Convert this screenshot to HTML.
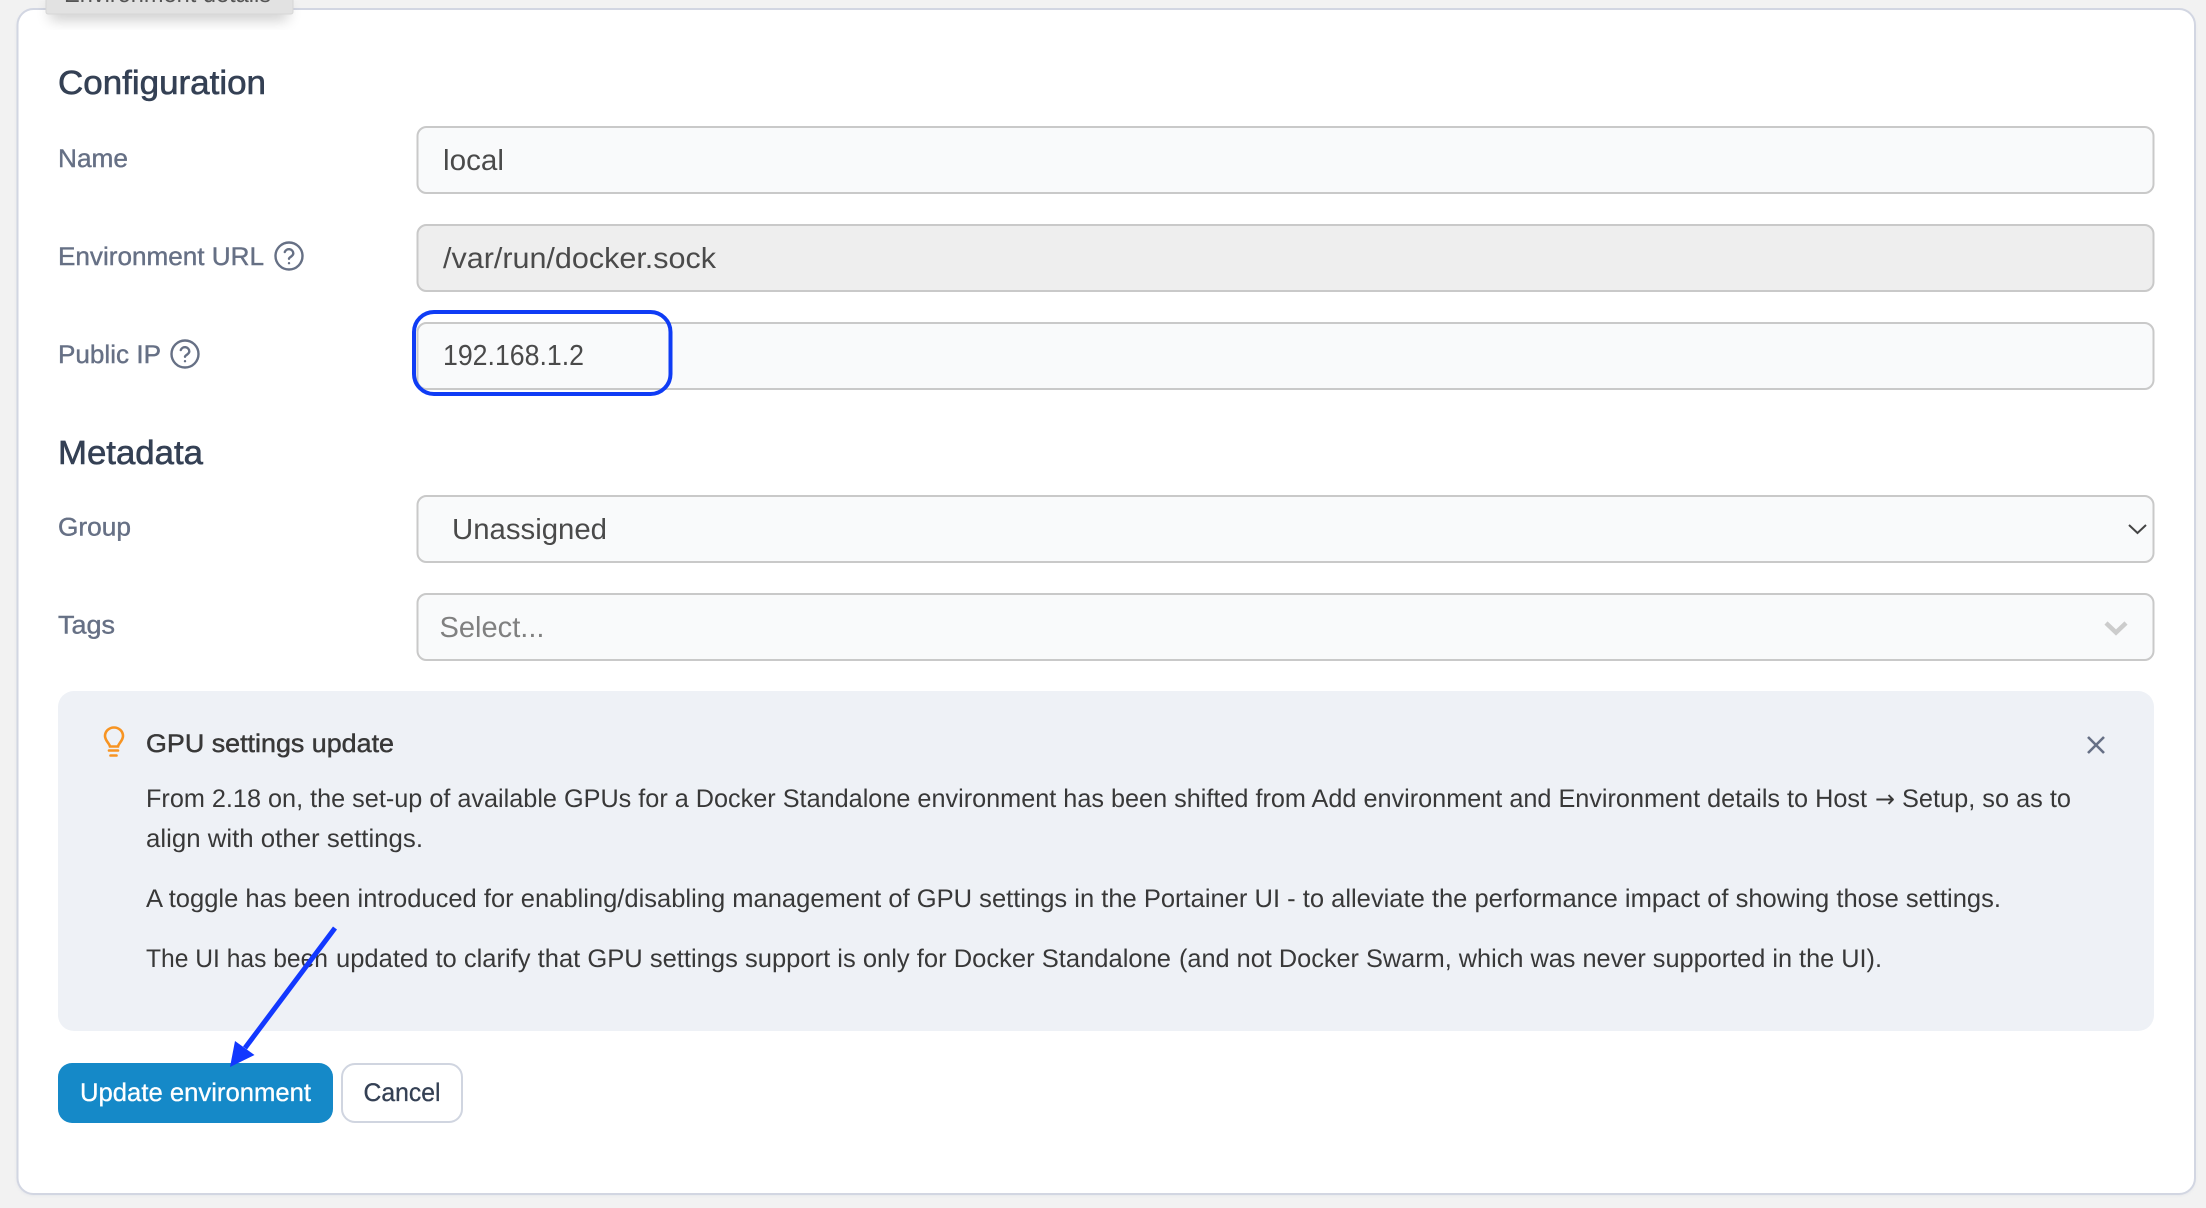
<!DOCTYPE html>
<html lang="en"><head><meta charset="utf-8"><title>Environment details</title>
<style>
html,body{margin:0;padding:0;width:2206px;height:1208px;overflow:hidden;background:#f2f2f2}
svg{display:block;position:absolute;left:0;top:0}
text{font-family:"Liberation Sans",sans-serif;text-rendering:geometricPrecision}
.h{font-size:33.5px;fill:#344054;stroke:#344054;stroke-width:.6px}
.l{font-size:25.5px;fill:#667085;stroke:#667085;stroke-width:.4px}
.v{font-size:29px;fill:#4a4a4a}
.b{font-size:25.5px;fill:#383838}
</style></head><body>
<svg width="2206" height="1208" viewBox="0 0 2206 1208" xmlns="http://www.w3.org/2000/svg">
<defs>
<filter id="s1" x="-20%" y="-20%" width="140%" height="180%"><feGaussianBlur stdDeviation="7"/></filter>
<filter id="s2" x="-2%" y="-2%" width="104%" height="104%"><feGaussianBlur stdDeviation="1.5"/></filter>
</defs>
<rect width="2206" height="1208" fill="#f2f2f2"/>
<rect x="17" y="11" width="2178" height="1184" rx="16" fill="#c9cedb" opacity=".5" filter="url(#s2)"/>
<rect x="17.5" y="9" width="2177.5" height="1185" rx="16" fill="#fff" stroke="#d2d6e2" stroke-width="2"/>
<rect x="50" y="4" width="238" height="16" fill="#000" opacity=".2" filter="url(#s1)"/>
<rect x="46" y="-10" width="247" height="24" rx="2" fill="#e2e2e2" stroke="#d6d6d6"/>
<text x="64" y="2" font-size="25" fill="#555" textLength="207" lengthAdjust="spacingAndGlyphs">Environment details</text>

<text class="h" x="58" y="94" textLength="208" lengthAdjust="spacingAndGlyphs">Configuration</text>
<text class="l" x="58" y="167" textLength="70" lengthAdjust="spacingAndGlyphs">Name</text>
<rect x="417.5" y="127" width="1736" height="66" rx="9" fill="#f9fafb" stroke="#c9c9c9" stroke-width="2"/>
<text class="v" x="443" y="170" textLength="61" lengthAdjust="spacingAndGlyphs">local</text>

<text class="l" x="58" y="265" textLength="206" lengthAdjust="spacingAndGlyphs">Environment URL</text>
<g fill="none" stroke="#667085" stroke-width="2.4" stroke-linecap="round" stroke-linejoin="round">
<circle cx="289" cy="256" r="13.5"/>
<path d="M284.8 252a4.4 4.4 0 0 1 8.5 1.4c0 2.9-4.3 3.7-4.3 5.4"/><path d="M289 263.2h.02"/>
<circle cx="185" cy="354" r="13.5"/>
<path d="M180.8 350a4.4 4.4 0 0 1 8.5 1.4c0 2.9-4.3 3.7-4.3 5.4"/><path d="M185 361.2h.02"/>
</g>
<rect x="417.5" y="225" width="1736" height="66" rx="9" fill="#eeeeee" stroke="#c9c9c9" stroke-width="2"/>
<text class="v" x="443" y="268" textLength="273" lengthAdjust="spacingAndGlyphs">/var/run/docker.sock</text>

<text class="l" x="58" y="363" textLength="103" lengthAdjust="spacingAndGlyphs">Public IP</text>
<rect x="417.5" y="323" width="1736" height="66" rx="9" fill="#f9fafb" stroke="#c9c9c9" stroke-width="2"/>
<text class="v" x="443" y="365" textLength="141" lengthAdjust="spacingAndGlyphs">192.168.1.2</text>
<rect x="414" y="312" width="256.5" height="82" rx="20" fill="none" stroke="#0f3cf5" stroke-width="4"/>

<text class="h" x="58" y="464" textLength="145" lengthAdjust="spacingAndGlyphs">Metadata</text>
<text class="l" x="58" y="535.5" textLength="73" lengthAdjust="spacingAndGlyphs">Group</text>
<rect x="417.5" y="496" width="1736" height="66" rx="9" fill="#f9fafb" stroke="#c9c9c9" stroke-width="2"/>
<text class="v" x="452" y="539" textLength="155" lengthAdjust="spacingAndGlyphs">Unassigned</text>
<path d="M2129 525l8.5 8 8.5-8" fill="none" stroke="#444" stroke-width="2"/>

<text class="l" x="58" y="633.5" textLength="57" lengthAdjust="spacingAndGlyphs">Tags</text>
<rect x="417.5" y="594" width="1736" height="66" rx="9" fill="#f9fafb" stroke="#c9c9c9" stroke-width="2"/>
<text class="v" x="439.5" y="637" style="fill:#808080" textLength="105" lengthAdjust="spacingAndGlyphs">Select...</text>
<path d="M2106 623l10 9.5 10-9.5" fill="none" stroke="#cccccc" stroke-width="4.5"/>

<rect x="58" y="691" width="2096" height="340" rx="16" fill="#eef1f6"/>
<g fill="none" stroke="#f79422" stroke-width="2.6" stroke-linecap="round">
<path d="M110 746.5c-.5-3-5-6-5-10.500a9 8.500 0 0 1 18 0c0 4.500-4.500 7.500-5 10.500z"/>
<path d="M109 750.5h9"/><path d="M110.5 755.5h6"/>
</g>
<text class="b" x="146" y="752" textLength="248" lengthAdjust="spacingAndGlyphs" style="stroke:#383838;stroke-width:.45px">GPU settings update</text>
<path d="M2088 737l16 16M2104 737l-16 16" fill="none" stroke="#667085" stroke-width="2.6"/>
<text class="b" x="146" y="807" textLength="1721" lengthAdjust="spacingAndGlyphs">From 2.18 on, the set-up of available GPUs for a Docker Standalone environment has been shifted from Add environment and Environment details to Host</text>
<text x="1875" y="807" font-size="24" fill="#383838" style="font-family:'DejaVu Sans',sans-serif" textLength="20" lengthAdjust="spacingAndGlyphs">→</text>
<text class="b" x="1902" y="807" textLength="169" lengthAdjust="spacingAndGlyphs">Setup, so as to</text>
<text class="b" x="146" y="847" textLength="277" lengthAdjust="spacingAndGlyphs">align with other settings.</text>
<text class="b" x="146" y="907" textLength="1855" lengthAdjust="spacingAndGlyphs">A toggle has been introduced for enabling/disabling management of GPU settings in the Portainer UI - to alleviate the performance impact of showing those settings.</text>
<text class="b" x="146" y="967" textLength="182" lengthAdjust="spacingAndGlyphs">The UI has been</text>
<text class="b" x="336" y="967" textLength="835" lengthAdjust="spacingAndGlyphs">updated to clarify that GPU settings support is only for Docker Standalone</text>
<text class="b" x="1179" y="967" textLength="703" lengthAdjust="spacingAndGlyphs">(and not Docker Swarm, which was never supported in the UI).</text>

<rect x="58" y="1063" width="275" height="60" rx="14" fill="#1589c8"/>
<text x="80" y="1101" font-size="25.5" fill="#fff" stroke="#fff" stroke-width=".3" textLength="231" lengthAdjust="spacingAndGlyphs">Update environment</text>
<rect x="342" y="1064" width="120" height="58" rx="13" fill="#fff" stroke="#d0d5e0" stroke-width="2"/>
<text x="363.5" y="1101" font-size="25.5" fill="#344054" stroke="#344054" stroke-width=".3" textLength="77" lengthAdjust="spacingAndGlyphs">Cancel</text>

<path d="M335 928L245 1048" fill="none" stroke="#1238ff" stroke-width="5"/>
<path d="M230 1067L235 1041L254.5 1055z" fill="#1238ff"/>
</svg>
</body></html>
